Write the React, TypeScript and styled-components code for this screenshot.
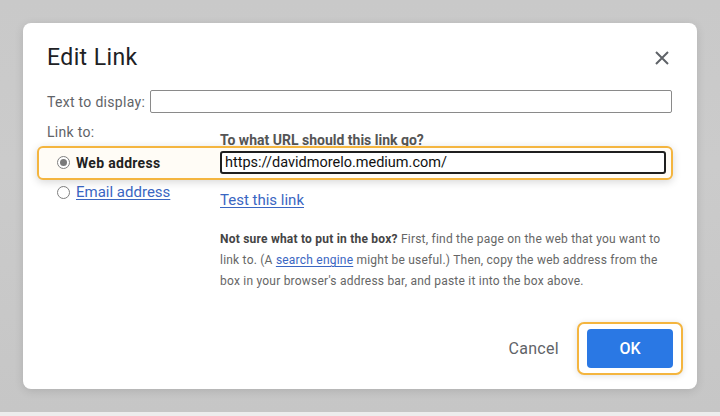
import React from "react";
import styled, { createGlobalStyle } from "styled-components";

const Global = createGlobalStyle`
  html, body { margin: 0; padding: 0; }
  body { font-family: Roboto, "Liberation Sans", Arial, sans-serif; background: #ececec; }
  * { box-sizing: border-box; }
`;

const Page = styled.div`
  width: 720px;
  height: 416px;
  display: flex;
  flex-direction: column;
  overflow: hidden;
`;

const Backdrop = styled.div`
  height: 412px;
  background: linear-gradient(180deg, #c9c9c9 0%, #cbcbcb 40%, #c6c6c6 100%);
  padding: 23px 23px 0 23px;
`;

const Strip = styled.div`
  flex: 1;
  background: #ededed;
`;

const Dialog = styled.div`
  width: 674px;
  height: 366px;
  background: #ffffff;
  border-radius: 8px;
  box-shadow: 0 2px 10px rgba(0, 0, 0, 0.12);
  padding: 21px 25px 14px 24px;
  display: flex;
  flex-direction: column;
`;

const TitleRow = styled.div`
  display: flex;
  align-items: center;
  justify-content: space-between;
  height: 28px;
`;

const Title = styled.h1`
  margin: 0;
  font-size: 23px;
  line-height: 28px;
  font-weight: 400;
  letter-spacing: 0.4px;
  color: #202124;
`;

const CloseButton = styled.button`
  border: none;
  background: transparent;
  padding: 0;
  width: 20px;
  height: 20px;
  display: flex;
  align-items: center;
  justify-content: center;
  cursor: pointer;
`;

const DisplayRow = styled.div`
  display: flex;
  align-items: center;
  gap: 5px;
  margin-top: 18px;
`;

const Label = styled.span`
  font-size: 14px;
  line-height: 16px;
  letter-spacing: 0.3px;
  color: #5f6368;
  white-space: nowrap;
`;

const TextInput = styled.div`
  flex: 1;
  height: 23px;
  border: 1px solid #8a8a8a;
  border-radius: 2px;
  background: #fff;
`;

const LinkRow = styled.div`
  display: grid;
  grid-template-columns: 173px 1fr;
  height: 22px;
  margin-top: 11px;
`;

const Heading = styled.div`
  margin-top: 8px;
  font-size: 14px;
  line-height: 16px;
  font-weight: 700;
  color: #555;
  white-space: nowrap;
`;

const Highlight = styled.div`
  position: relative;
  display: grid;
  grid-template-columns: 173px 1fr;
  align-items: center;
  margin: 0 -1px 0 -10px;
  padding: 3px 5px 4px 8px;
  border: 2px solid #f4b53f;
  border-radius: 6px;
  background: #fffcf6;
  box-shadow: 0 2px 9px rgba(0, 0, 0, 0.16);
`;

const RadioOption = styled.label`
  display: flex;
  align-items: center;
  gap: 6px;
  padding-left: 10px;
  height: 18px;
`;

const Radio = styled.span<{ $checked?: boolean }>`
  width: 13px;
  height: 13px;
  border-radius: 50%;
  border: 1px solid #808080;
  background: #fff;
  display: flex;
  align-items: center;
  justify-content: center;
  flex-shrink: 0;
  &::after {
    content: "";
    width: 7px;
    height: 7px;
    border-radius: 50%;
    background: ${(p) => (p.$checked ? "#7a7a7a" : "transparent")};
  }
`;

const OptionText = styled.span`
  font-size: 14px;
  line-height: 18px;
  font-weight: 700;
  letter-spacing: 0.3px;
  color: #222;
`;

const UrlInput = styled.div`
  height: 23px;
  border: 2px solid #1f1f1f;
  border-radius: 3px;
  background: #fff;
  padding: 0 3px;
  font-size: 14.5px;
  line-height: 19px;
  color: #111;
  white-space: nowrap;
`;

const OtherRow = styled.div`
  display: grid;
  grid-template-columns: 173px 1fr;
  align-items: start;
  margin-top: 3px;
`;

const Link = styled.a<{ $top?: number }>`
  font-size: 15px;
  line-height: 18px;
  color: #3a66c2;
  text-decoration: underline;
  text-underline-offset: 2px;
  margin-top: ${(p) => p.$top ?? 0}px;
  cursor: pointer;
  white-space: nowrap;
`;

const SmallLink = styled.a`
  color: #3a66c2;
  text-decoration: underline;
  text-underline-offset: 2px;
`;

const HelpRight = styled.div`
  display: flex;
  flex-direction: column;
  align-items: flex-start;
`;

const Help = styled.p`
  margin: 20px 0 0 0;
  font-size: 12px;
  line-height: 21px;
  color: #666;
  white-space: nowrap;
  letter-spacing: 0.22px;
  strong {
    color: #444;
    font-weight: 700;
  }
`;

const Footer = styled.div`
  margin-top: auto;
  margin-right: -11px;
  display: flex;
  align-items: center;
  justify-content: flex-end;
  gap: 18px;
`;

const CancelButton = styled.button`
  border: none;
  background: transparent;
  font-family: inherit;
  font-size: 16px;
  font-weight: 400;
  letter-spacing: 0.3px;
  color: #5f6368;
  padding: 0;
  cursor: pointer;
`;

const OkFrame = styled.div`
  padding: 5px 8px;
  border: 2px solid #f4b53f;
  border-radius: 7px;
  background: #fff;
  box-shadow: 0 1px 6px rgba(0, 0, 0, 0.12);
`;

const OkButton = styled.button`
  width: 86px;
  height: 39px;
  border: none;
  border-radius: 4px;
  background: #2a78e4;
  color: #fff;
  font-family: inherit;
  font-size: 16px;
  font-weight: 500;
  cursor: pointer;
`;

export default function App() {
  return (
    <Page>
      <Global />
      <Backdrop>
        <Dialog>
          <TitleRow>
            <Title>Edit Link</Title>
            <CloseButton aria-label="Close">
              <svg width="16" height="16" viewBox="0 0 16 16">
                <path d="M2 2 L14 14 M14 2 L2 14" stroke="#5f6368" strokeWidth="2" />
              </svg>
            </CloseButton>
          </TitleRow>
          <DisplayRow>
            <Label>Text to display:</Label>
            <TextInput />
          </DisplayRow>
          <LinkRow>
            <Label>Link to:</Label>
            <Heading>To what URL should this link go?</Heading>
          </LinkRow>
          <Highlight>
            <RadioOption>
              <Radio $checked />
              <OptionText>Web address</OptionText>
            </RadioOption>
            <UrlInput>https://davidmorelo.medium.com/</UrlInput>
          </Highlight>
          <OtherRow>
            <RadioOption>
              <Radio />
              <Link>Email address</Link>
            </RadioOption>
            <HelpRight>
              <Link $top={8}>Test this link</Link>
              <Help>
                <strong>Not sure what to put in the box?</strong> First, find the page on the web that you want to
                <br />
                link to. (A <SmallLink>search engine</SmallLink> might be useful.) Then, copy the web address from the
                <br />
                box in your browser's address bar, and paste it into the box above.
              </Help>
            </HelpRight>
          </OtherRow>
          <Footer>
            <CancelButton>Cancel</CancelButton>
            <OkFrame>
              <OkButton>OK</OkButton>
            </OkFrame>
          </Footer>
        </Dialog>
      </Backdrop>
      <Strip />
    </Page>
  );
}
